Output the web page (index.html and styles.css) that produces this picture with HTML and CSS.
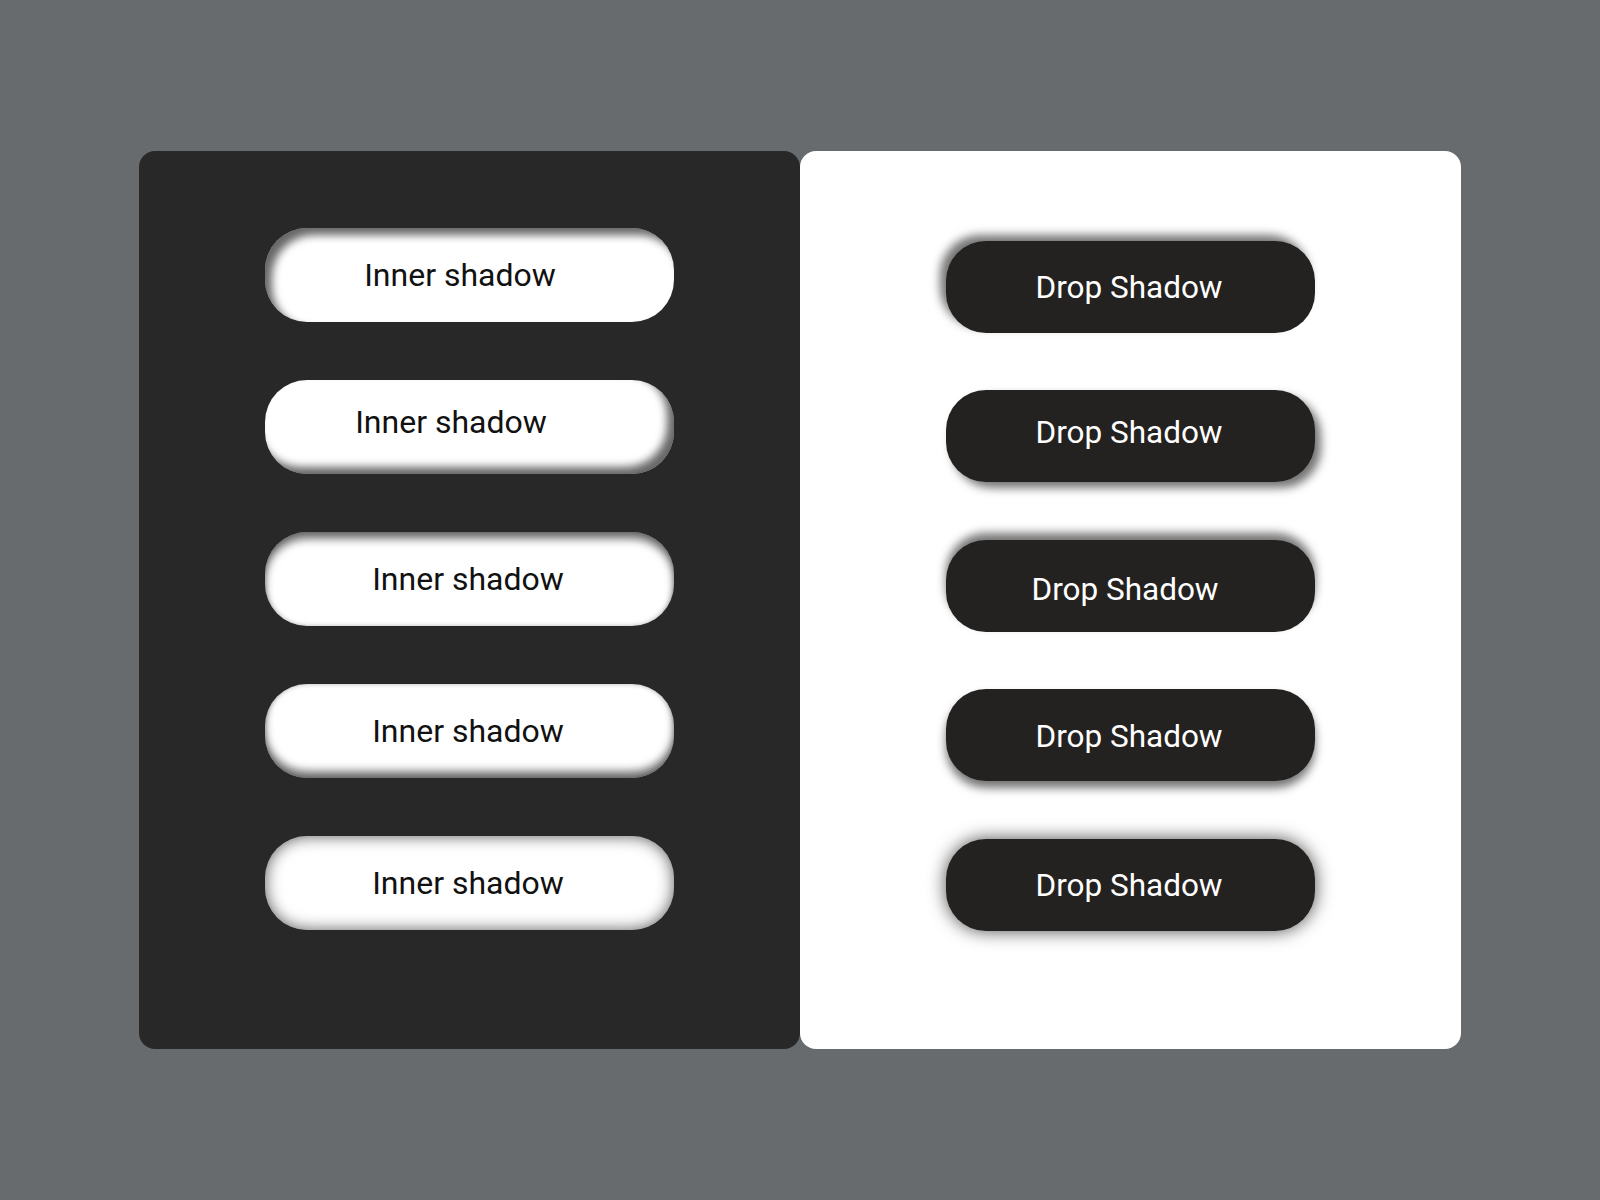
FILE: index.html
```html
<!DOCTYPE html>
<html lang="en">
<head>
    <meta charset="UTF-8">
    <meta name="viewport" content="width=device-width, initial-scale=1.0">
    <title>Shadows</title>
    <link rel="stylesheet" href="styles.css">
</head>
<body>
    <main class="board">
        <!-- Pressed-in buttons on the dark side -->
        <section class="panel panel-dark">
            <div class="pill inner inner-tl">Inner shadow</div>
            <div class="pill inner inner-br">Inner shadow</div>
            <div class="pill inner inner-top">Inner shadow</div>
            <div class="pill inner inner-bottom">Inner shadow</div>
            <div class="pill inner inner-all">Inner shadow</div>
        </section>

        <!-- Raised buttons on the light side -->
        <section class="panel panel-light">
            <div class="pill drop drop-tl">Drop Shadow</div>
            <div class="pill drop drop-br">Drop Shadow</div>
            <div class="pill drop drop-top">Drop Shadow</div>
            <div class="pill drop drop-bottom">Drop Shadow</div>
            <div class="pill drop drop-all">Drop Shadow</div>
        </section>
    </main>
</body>
</html>
```

FILE: styles.css
```css
html, body {
    margin: 0;
    height: 100%;
}
body {
    background-color: #676b6e;
    font-family: Roboto, "Liberation Sans", sans-serif;
    display: flex;
    justify-content: center;
    align-items: center;
}
.board {
    display: flex;
    margin-top: -1px;
}
.panel {
    width: 661px;
    height: 898px;
    border-radius: 16px;
    display: flex;
    flex-direction: column;
    align-items: center;
    box-sizing: border-box;
}
.panel-dark {
    background-color: #282828;
    padding-top: 77px;
    gap: 58px;
}
.panel-light {
    background-color: #ffffff;
    padding-top: 90px;
    gap: 57.5px;
}
.pill {
    display: flex;
    justify-content: center;
    align-items: center;
    box-sizing: border-box;
    font-size: 32px;
    flex-shrink: 0;
}

/* inner shadow pills */
.inner {
    width: 409px;
    height: 94px;
    border-radius: 42px;
    background-color: #ffffff;
    color: #111111;
    padding-right: 3px;
}
.inner-tl {
    box-shadow: inset 7px 7px 9px rgba(0, 0, 0, 0.6);
    padding-right: 19px;
}
.inner-br {
    box-shadow: inset -7px -7px 9px rgba(0, 0, 0, 0.6);
    padding-right: 37px;
    padding-bottom: 10px;
}
.inner-top {
    box-shadow: inset 0 7px 9px rgba(0, 0, 0, 0.55), inset 0 0 5px rgba(0, 0, 0, 0.25);
}
.inner-bottom {
    box-shadow: inset 0 -7px 9px rgba(0, 0, 0, 0.55), inset 0 0 5px rgba(0, 0, 0, 0.25);
}
.inner-all {
    box-shadow: inset 0 0 16px rgba(0, 0, 0, 0.65);
}

/* drop shadow pills */
.drop {
    width: 369px;
    height: 92px;
    border-radius: 40px;
    background-color: #242220;
    color: #ffffff;
    font-size: 31.5px;
    padding-right: 3px;
    padding-top: 2px;
}
.drop-tl {
    box-shadow: -6px -6px 10px rgba(0, 0, 0, 0.55);
}
.drop-br {
    box-shadow: 6px 6px 10px rgba(0, 0, 0, 0.55);
    padding-top: 0;
    padding-bottom: 7px;
}
.drop-top {
    box-shadow: 0 -7px 10px rgba(0, 0, 0, 0.55);
    padding-right: 11px;
    padding-top: 8px;
}
.drop-bottom {
    box-shadow: 0 7px 10px rgba(0, 0, 0, 0.55);
}
.drop-all {
    box-shadow: 0 0 18px rgba(0, 0, 0, 0.7);
}
```
